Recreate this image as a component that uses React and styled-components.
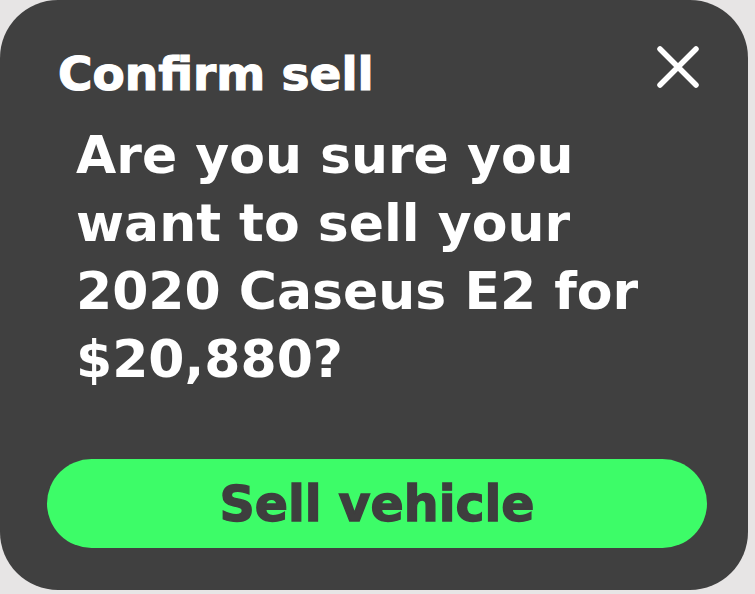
import React from "react";
import styled, { createGlobalStyle } from "styled-components";

const GlobalStyle = createGlobalStyle`
  html, body {
    margin: 0;
    padding: 0;
    background-color: #e7e5e5;
  }
  body {
    font-family: "DejaVu Sans", "Liberation Sans", sans-serif;
  }
`;

const Page = styled.div`
  width: 755px;
  height: 594px;
  overflow: hidden;
`;

const Dialog = styled.div`
  box-sizing: border-box;
  width: 748px;
  height: 590px;
  display: flex;
  flex-direction: column;
  padding: 45px 41px 42px 47px;
  border-radius: 58px;
  background-color: #404040;
  color: #ffffff;
`;

const Header = styled.div`
  display: flex;
  justify-content: space-between;
  align-items: flex-start;
`;

const Title = styled.h2`
  margin: 5px 0 0 11px;
  font-size: 47px;
  line-height: 48px;
  font-weight: 700;
  -webkit-text-stroke: 1.2px currentColor;
`;

const CloseButton = styled.button`
  width: 44px;
  height: 44px;
  margin-right: 7px;
  padding: 0;
  border: none;
  background: none;
  color: #ffffff;
  cursor: pointer;
  svg {
    display: block;
  }
`;

const Message = styled.p`
  margin: 23px 0 0 29px;
  max-width: 600px;
  font-size: 52px;
  line-height: 68px;
  font-weight: 700;
`;

const SellButton = styled.button`
  margin-top: auto;
  width: 100%;
  height: 89px;
  padding: 3px 0 0;
  border: none;
  border-radius: 45px;
  background-color: #3dfc68;
  color: #3e3e3e;
  font-family: "DejaVu Sans", "Liberation Sans", sans-serif;
  font-size: 49px;
  line-height: 50px;
  font-weight: 700;
  -webkit-text-stroke: 1.4px currentColor;
  cursor: pointer;
`;

function CloseIcon() {
  return (
    <svg width="44" height="44" viewBox="0 0 44 44" fill="none">
      <path
        d="M4 4 L40 40 M40 4 L4 40"
        stroke="currentColor"
        strokeWidth="5.5"
        strokeLinecap="round"
      />
    </svg>
  );
}

export default function App() {
  return (
    <Page>
      <GlobalStyle />
      <Dialog>
        <Header>
          <Title>Confirm sell</Title>
          <CloseButton aria-label="Close">
            <CloseIcon />
          </CloseButton>
        </Header>
        <Message>Are you sure you want to sell your 2020 Caseus E2 for $20,880?</Message>
        <SellButton>Sell vehicle</SellButton>
      </Dialog>
    </Page>
  );
}
